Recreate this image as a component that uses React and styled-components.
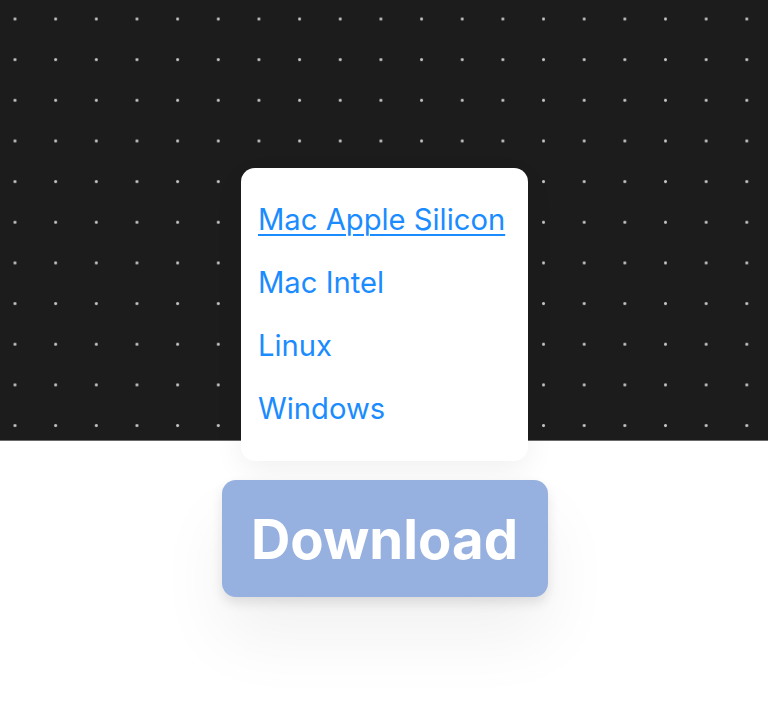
import styled, { createGlobalStyle } from "styled-components";

const GlobalStyle = createGlobalStyle`
  html, body {
    margin: 0;
    padding: 0;
    background: #ffffff;
    font-family: Inter, "Liberation Sans", sans-serif;
  }
`;

const platforms = ["Mac Apple Silicon", "Mac Intel", "Linux", "Windows"];

export default function App() {
  return (
    <>
      <GlobalStyle />
      <StyledPage>
        <StyledHero />
        <StyledStack>
          <StyledMenu>
            {platforms.map((name, i) => (
              <StyledItem key={name} href="#" $active={i === 0}>
                {name}
              </StyledItem>
            ))}
          </StyledMenu>
          <StyledButton type="button">Download</StyledButton>
        </StyledStack>
      </StyledPage>
    </>
  );
}

const StyledPage = styled.div`
  display: grid;
  grid-template-columns: 1fr;
  grid-template-rows: 441px 1fr;
  min-height: 717px;
`;

const StyledHero = styled.div`
  grid-row: 1;
  grid-column: 1;
  border-bottom: 1px solid #6a6a6a;
  background-color: #1c1c1c;
  background-image: radial-gradient(circle, #c4c4c4 0, #c4c4c4 1px, rgba(196, 196, 196, 0) 2px);
  background-size: 40.67px 40.67px;
  background-position: -5.33px -1.33px;
  box-sizing: border-box;
`;

const StyledStack = styled.div`
  grid-row: 1 / 3;
  grid-column: 1;
  display: flex;
  flex-direction: column;
  align-items: center;
  gap: 19px;
  padding-top: 168px;
`;

const StyledMenu = styled.div`
  width: 287px;
  box-sizing: border-box;
  padding: 20px 16px 21px 17px;
  margin-left: 1px;
  background: #ffffff;
  border-radius: 14px;
  box-shadow: 0 10px 30px rgba(0, 0, 0, 0.06);
  display: flex;
  flex-direction: column;
`;

const StyledItem = styled.a`
  display: block;
  line-height: 63px;
  font-size: 29.2px;
  color: #1a8cff;
  text-decoration: ${(p) => (p.$active ? "underline" : "none")};
  text-decoration-thickness: 2px;
  text-underline-offset: 4px;
  white-space: nowrap;
`;

const StyledButton = styled.button`
  width: 326px;
  height: 117px;
  margin-left: 1px;
  border: none;
  border-radius: 14px;
  background: #96b0e0;
  color: #ffffff;
  font-family: Inter, "Liberation Sans", sans-serif;
  font-weight: 700;
  font-size: 54.5px;
  cursor: pointer;
  box-shadow: 0 6px 12px rgba(0, 0, 0, 0.1), 0 40px 70px rgba(0, 0, 0, 0.06);
`;
